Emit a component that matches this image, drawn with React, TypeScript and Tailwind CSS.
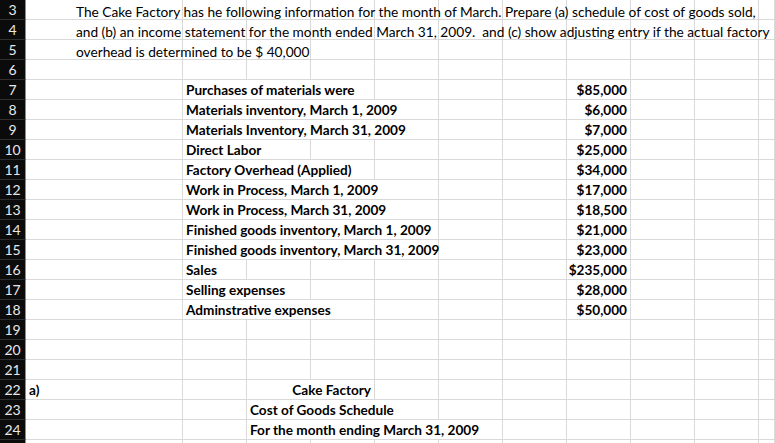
import React from "react";

type Cell = { col: number; span?: number; text?: string; align?: "left" | "right"; bold?: boolean };

const spanClass: Record<number, string> = {
	1: "col-span-1",
	2: "col-span-2",
	3: "col-span-3",
	4: "col-span-4",
	5: "col-span-5",
};

// column index: 0 = A ... 10 = K (partial)
const rows: { n: number; cells: Cell[] }[] = [
	{ n: 3, cells: [] },
	{ n: 4, cells: [] },
	{ n: 5, cells: [] },
	{ n: 6, cells: [] },
	{ n: 7, cells: [{ col: 1, span: 3, text: "Purchases of materials were", bold: true }, { col: 7, text: "$85,000", align: "right", bold: true }] },
	{ n: 8, cells: [{ col: 1, span: 4, text: "Materials inventory, March 1, 2009", bold: true }, { col: 7, text: "$6,000", align: "right", bold: true }] },
	{ n: 9, cells: [{ col: 1, span: 4, text: "Materials Inventory, March 31, 2009", bold: true }, { col: 7, text: "$7,000", align: "right", bold: true }] },
	{ n: 10, cells: [{ col: 1, span: 2, text: "Direct Labor", bold: true }, { col: 7, text: "$25,000", align: "right", bold: true }] },
	{ n: 11, cells: [{ col: 1, span: 3, text: "Factory Overhead (Applied)", bold: true }, { col: 7, text: "$34,000", align: "right", bold: true }] },
	{ n: 12, cells: [{ col: 1, span: 4, text: "Work in Process, March 1, 2009", bold: true }, { col: 7, text: "$17,000", align: "right", bold: true }] },
	{ n: 13, cells: [{ col: 1, span: 4, text: "Work in Process, March 31, 2009", bold: true }, { col: 7, text: "$18,500", align: "right", bold: true }] },
	{ n: 14, cells: [{ col: 1, span: 4, text: "Finished goods inventory, March 1, 2009", bold: true }, { col: 7, text: "$21,000", align: "right", bold: true }] },
	{ n: 15, cells: [{ col: 1, span: 4, text: "Finished goods inventory, March 31, 2009", bold: true }, { col: 7, text: "$23,000", align: "right", bold: true }] },
	{ n: 16, cells: [{ col: 1, text: "Sales", bold: true }, { col: 7, text: "$235,000", align: "right", bold: true }] },
	{ n: 17, cells: [{ col: 1, span: 2, text: "Selling expenses", bold: true }, { col: 7, text: "$28,000", align: "right", bold: true }] },
	{ n: 18, cells: [{ col: 1, span: 3, text: "Adminstrative expenses", bold: true }, { col: 7, text: "$50,000", align: "right", bold: true }] },
	{ n: 19, cells: [] },
	{ n: 20, cells: [] },
	{ n: 21, cells: [] },
	{ n: 22, cells: [{ col: 0, text: "a)", bold: true }, { col: 2, span: 2, text: "Cake Factory", align: "right", bold: true }] },
	{ n: 23, cells: [{ col: 2, span: 3, text: "Cost of Goods Schedule", bold: true }] },
	{ n: 24, cells: [{ col: 2, span: 4, text: "For the month ending March 31, 2009", bold: true }] },
	{ n: 25, cells: [] },
];

const fillRow = (cells: Cell[]) => {
	const out: Cell[] = [];
	let c = 0;
	const sorted = [...cells].sort((a, b) => a.col - b.col);
	for (const cell of sorted) {
		while (c < cell.col) out.push({ col: c++ });
		out.push(cell);
		c += cell.span ?? 1;
	}
	while (c < 11) out.push({ col: c++ });
	return out;
};

const intro = [
	"The Cake Factory has he following information for the month of March. Prepare (a) schedule of cost of goods sold,",
	"and (b) an income statement for the month ended March 31, 2009.  and (c) show adjusting entry if the actual factory",
	"overhead is determined to be $ 40,000",
];

export default function App() {
	return (
		<div className="relative w-[775px] h-[443px] overflow-hidden bg-white font-['Lato',sans-serif] text-[13.6px] text-black">
			{rows.map((row) => (
				<div key={row.n} className="flex h-5">
					<div className="w-[26px] shrink-0 h-5 bg-[#0b0b0b] border-r border-r-[#8c8c8c] border-b border-b-[#2e2e2e] flex items-center justify-center text-[14px] text-[#e8e8e8] leading-none">
						{row.n < 25 ? row.n : ""}
					</div>
					<div className="grid flex-1 grid-cols-[157px_repeat(9,64px)_1fr]">
						{fillRow(row.cells).map((cell) => (
							<div
								key={cell.col}
								className={`${spanClass[cell.span ?? 1]} h-5 border-r border-b border-[#d9d9d9] flex items-end pb-[1px] px-[3px] whitespace-nowrap leading-none ${
									cell.align === "right" ? "justify-end" : "justify-start"
								} ${cell.bold ? "font-bold" : ""}`}
							>
								{cell.text}
							</div>
						))}
					</div>
				</div>
			))}

			<div className="absolute left-[76px] top-0 flex flex-col text-[13.7px]">
				{intro.map((line) => (
					<div key={line} className="h-5 flex items-end pb-[1px] whitespace-pre leading-none">
						{line}
					</div>
				))}
			</div>
		</div>
	);
}
